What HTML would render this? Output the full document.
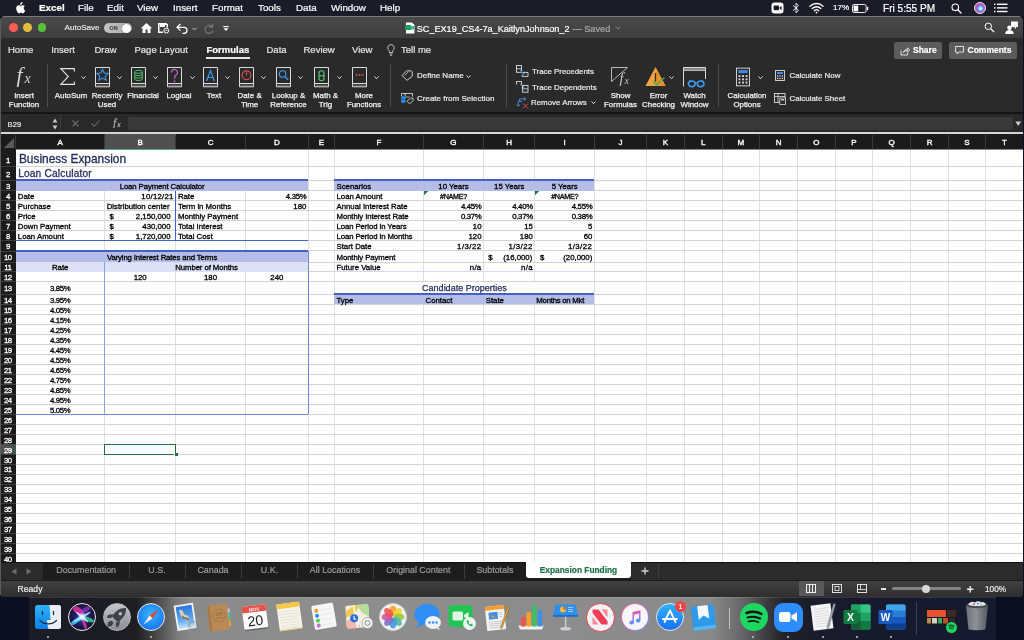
<!DOCTYPE html><html><head><meta charset="utf-8"><title>Excel</title><style>
*{margin:0;padding:0;box-sizing:border-box}
html,body{width:1024px;height:640px;overflow:hidden;background:#0c0f20}
body{position:relative;font-family:"Liberation Sans",sans-serif;color:#fff;-webkit-font-smoothing:antialiased}
.a{position:absolute}
.t{position:absolute;white-space:pre;line-height:1;-webkit-text-stroke:0.2px currentColor}
.c{position:absolute;white-space:pre;line-height:1;font-size:8px;color:#000;-webkit-text-stroke:0.3px currentColor}
.r{text-align:right}
.m{text-align:center}
.lbl{position:absolute;white-space:pre;line-height:8.6px;font-size:7.9px;color:#f2f2f2;text-align:center;-webkit-text-stroke:0.25px currentColor}
svg{position:absolute;overflow:visible}
#root{position:absolute;left:0;top:0;width:1024px;height:640px;overflow:hidden;will-change:transform}
</style></head><body><div id="root">
<div class="a" style="left:0px;top:0px;width:1024px;height:16px;background:#1a1c28;"></div>
<svg style="left:15px;top:2px" width="11" height="12" viewBox="0 0 22 24"><path fill="#fff" d="M15.2 0c.2 1.500-.4 2.900-1.300 3.900-.9 1.100-2.300 1.900-3.700 1.800-.2-1.400.5-2.900 1.300-3.800C12.400.8 14 .1 15.200 0zM19.800 8.200c-.2.100-2.500 1.400-2.400 4.200 0 3.300 2.900 4.400 3 4.400 0 .1-.5 1.600-1.500 3.100-.9 1.300-1.900 2.700-3.400 2.700-1.500 0-1.900-.9-3.600-.9s-2.200.9-3.600.9c-1.500.1-2.600-1.400-3.500-2.800C2.900 17.100 1.400 12.300 3.300 9c1-1.700 2.700-2.700 4.500-2.700 1.400 0 2.800 1 3.600 1 .9 0 2.500-1.200 4.200-1 .7 0 2.800.3 4.200 1.900z"/></svg>
<div class="t" style="left:39px;top:3px;font-size:9.8px;color:#fff;font-weight:700;">Excel</div>
<div class="t" style="left:78px;top:3px;font-size:9.8px;color:#fff;font-weight:400;">File</div>
<div class="t" style="left:107px;top:3px;font-size:9.8px;color:#fff;font-weight:400;">Edit</div>
<div class="t" style="left:137px;top:3px;font-size:9.8px;color:#fff;font-weight:400;">View</div>
<div class="t" style="left:173px;top:3px;font-size:9.8px;color:#fff;font-weight:400;">Insert</div>
<div class="t" style="left:212px;top:3px;font-size:9.8px;color:#fff;font-weight:400;">Format</div>
<div class="t" style="left:258px;top:3px;font-size:9.8px;color:#fff;font-weight:400;">Tools</div>
<div class="t" style="left:296px;top:3px;font-size:9.8px;color:#fff;font-weight:400;">Data</div>
<div class="t" style="left:331px;top:3px;font-size:9.8px;color:#fff;font-weight:400;">Window</div>
<div class="t" style="left:380px;top:3px;font-size:9.8px;color:#fff;font-weight:400;">Help</div>
<div class="t" style="left:883px;top:3.9px;font-size:10.1px;color:#fff;font-weight:400;">Fri 5:55 PM</div>
<div class="t" style="left:833px;top:4.4px;font-size:8.1px;color:#fff;font-weight:400;">17%</div>
<svg style="left:771px;top:2px" width="13" height="12" viewBox="0 0 13 12"><rect x="0.5" y="0.5" width="12" height="11" rx="3" fill="#fff"/><rect x="2.6" y="3.6" width="5.4" height="4.6" rx="1" fill="#1a1c28"/><path d="M8.6 5.2l2-1.300v4l-2-1.300z" fill="#1a1c28"/></svg>
<svg style="left:792px;top:2px" width="8" height="12" viewBox="0 0 8 12"><path d="M1 3.300l5.500 5L4 10.800V1.200l2.500 2.500L1 8.700" fill="none" stroke="#fff" stroke-width="0.9"/></svg>
<svg style="left:809px;top:2px" width="15" height="12" viewBox="0 0 15 12"><g fill="none" stroke="#fff" stroke-width="1.300" stroke-linecap="round"><path d="M1 4.200a9.200 9.200 0 0 1 13 0"/><path d="M3.200 6.500a6.100 6.100 0 0 1 8.600 0"/><path d="M5.400 8.700a3 3 0 0 1 4.200 0"/></g><circle cx="7.500" cy="10.600" r="0.900" fill="#fff"/></svg>
<svg style="left:852px;top:3.500px" width="17" height="9" viewBox="0 0 17 9"><rect x="0.5" y="0.5" width="13.600" height="8" rx="1.500" fill="none" stroke="#fff" stroke-width="0.9"/><rect x="1.6" y="1.6" width="4.600" height="5.800" fill="#fff"/><rect x="15" y="2.800" width="1.200" height="3.400" rx="0.5" fill="#fff"/></svg>
<svg style="left:951px;top:2.500px" width="11" height="11" viewBox="0 0 11 11"><circle cx="4.300" cy="4.300" r="3.300" fill="none" stroke="#fff" stroke-width="1.100"/><path d="M6.800 6.800L10 10" stroke="#fff" stroke-width="1.300" stroke-linecap="round"/></svg>
<div class="a" style="left:974px;top:2px;width:12px;height:12px;border-radius:50%;background:radial-gradient(circle at 55% 55%,#fff 0,#c9f0ff 14%,#4fb0f5 30%,#b04fd0 52%,#e0409a 68%,#3a2a80 86%);border:1px solid #eeeef4"></div>
<svg style="left:994px;top:3px" width="13" height="10" viewBox="0 0 13 10"><g fill="#fff"><rect x="0" y="0.600" width="1.500" height="1.400"/><rect x="3" y="0.600" width="10.500" height="1.400"/><rect x="0" y="4.200" width="1.500" height="1.400"/><rect x="3" y="4.200" width="10.500" height="1.400"/><rect x="0" y="7.800" width="1.500" height="1.400"/><rect x="3" y="7.800" width="10.500" height="1.400"/></g></svg>
<div class="a" style="left:0;top:16px;width:1023px;height:580.500px;background:#2a2a2a;border-radius:5px 5px 4px 4px;overflow:hidden">
<div class="a" style="left:0px;top:0px;width:1024px;height:22px;background:linear-gradient(#4a4a4a,#3e3e3e);"></div>
<div class="a" style="left:0px;top:0px;width:1024px;height:1px;background:#7a7a7a;"></div>
<div class="a" style="left:9.149999999999999px;top:7.25px;width:8.9px;height:8.9px;background:#fc5b57;border-radius:50%"></div>
<div class="a" style="left:23.25px;top:7.25px;width:8.9px;height:8.9px;background:#e5bf3c;border-radius:50%"></div>
<div class="a" style="left:37.55px;top:7.25px;width:8.9px;height:8.9px;background:#57c038;border-radius:50%"></div>
<div class="t" style="left:64.5px;top:8px;font-size:8.1px;color:#e6e6e6;font-weight:400;">AutoSave</div>
<div class="a" style="left:103.75px;top:7.4px;width:28.5px;height:9.6px;background:linear-gradient(90deg,#c4c4c4,#a8a8a8);border-radius:5px"></div>
<div class="t" style="left:109.5px;top:9.6px;font-size:5.4px;color:#4a4a4a;font-weight:700;">ON</div>
<div class="a" style="left:122.4px;top:7.8px;width:9.0px;height:8.8px;background:#fff;border-radius:50%;box-shadow:0 0 1px rgba(0,0,0,0.5)"></div>
<svg style="left:139.5px;top:5.5px" width="13" height="12" viewBox="0 0 13 12"><path d="M6.500 1L0.800 6.300h1.700V11h3V7.600h2V11h3V6.300h1.700z" fill="#fff"/></svg>
<svg style="left:157px;top:6px" width="13" height="12" viewBox="0 0 13 12"><path d="M1 1h8.500l1.500 1.500V5.500H9.500V3H8V5H3V2.500H2.500V9.500H6V11H1z" fill="#fff"/><circle cx="9.300" cy="8.600" r="2.400" fill="none" stroke="#fff" stroke-width="1"/><path d="M8.200 8.600h2.200" stroke="#fff" stroke-width="0.8"/></svg>
<svg style="left:176px;top:6.5px" width="12" height="11" viewBox="0 0 12 11"><path d="M4.500 1L1 4.300l3.500 3.300M1.200 4.300H8a3 3 0 0 1 0 6H6.500" fill="none" stroke="#fff" stroke-width="1.200"/></svg>
<svg style="left:192px;top:10.5px" width="5" height="4" viewBox="0 0 5 4"><path d="M0.500 0.800L2.500 2.800L4.500 0.800" fill="none" stroke="#ddd" stroke-width="0.9"/></svg>
<svg style="left:202.5px;top:6.0px" width="12" height="12" viewBox="0 0 12 12"><path d="M9.600 5.200H6.200M9.600 5.200V1.600M9.400 5a4 4 0 1 0 .600 3.500" fill="none" stroke="#747474" stroke-width="1.200"/></svg>
<svg style="left:223.2px;top:10.2px" width="6" height="5.2" viewBox="0 0 7 6"><rect x="0.300" y="0" width="6.400" height="1.300" fill="#fff"/><path d="M0.600 2.600h5.800L3.500 5.800z" fill="#fff"/></svg>
<svg style="left:404.5px;top:5.7px" width="10" height="12" viewBox="0 0 10 12"><path d="M1 0.500h6l2.500 2.500v8.500H1z" fill="#fff"/><rect x="0" y="3" width="6" height="5" fill="#1e9e5a"/><rect x="5" y="4" width="4" height="3.500" fill="#35b673"/></svg>
<div class="t" style="left:416.8px;top:9.0px;font-size:9.1px;color:#fff;font-weight:400;">SC_EX19_CS4-7a_KaitlynJohnson_2</div>
<div class="t" style="left:572.5px;top:9.0px;font-size:9.2px;color:#a8a8a8;font-weight:400;">— Saved</div>
<svg style="left:614.5px;top:10.3px" width="6" height="4" viewBox="0 0 6 4"><path d="M0.500 0.500L3 3L5.500 0.500" fill="none" stroke="#8a8a8a" stroke-width="0.9"/></svg>
<svg style="left:983.5px;top:6px" width="11" height="11" viewBox="0 0 11 11"><circle cx="4.300" cy="4.300" r="3.200" fill="none" stroke="#fff" stroke-width="1"/><path d="M6.700 6.700L10 10" stroke="#fff" stroke-width="1.200"/></svg>
<svg style="left:1004.5px;top:5px" width="14" height="14" viewBox="0 0 14 14"><path d="M6 0.500h7v5.500h-2v2l-2-2H6z" fill="#fff"/><circle cx="4.500" cy="6.800" r="2.300" fill="#fff"/><path d="M0.300 13c0-3 2-4 4.200-4s4.200 1 4.200 4z" fill="#fff"/></svg>
<div class="t" style="left:8px;top:29.2px;font-size:9.5px;color:#e4e4e4;font-weight:400;">Home</div>
<div class="t" style="left:51.2px;top:29.2px;font-size:9.5px;color:#e4e4e4;font-weight:400;">Insert</div>
<div class="t" style="left:94.5px;top:29.2px;font-size:9.5px;color:#e4e4e4;font-weight:400;">Draw</div>
<div class="t" style="left:134.5px;top:29.2px;font-size:9.5px;color:#e4e4e4;font-weight:400;">Page Layout</div>
<div class="t" style="left:206.5px;top:29.2px;font-size:9.5px;color:#fff;font-weight:700;">Formulas</div>
<div class="t" style="left:266.5px;top:29.2px;font-size:9.5px;color:#e4e4e4;font-weight:400;">Data</div>
<div class="t" style="left:303.5px;top:29.2px;font-size:9.5px;color:#e4e4e4;font-weight:400;">Review</div>
<div class="t" style="left:352px;top:29.2px;font-size:9.5px;color:#e4e4e4;font-weight:400;">View</div>
<div class="a" style="left:206px;top:41.4px;width:44px;height:1.3px;background:#e4e4e4;"></div>
<svg style="left:386.5px;top:27.5px" width="8" height="12" viewBox="0 0 8 12"><path d="M4 0.600a3.300 3.300 0 0 0-1.700 6.100v1.800h3.400V6.700A3.300 3.300 0 0 0 4 0.600zM2.500 10h3M3 11.300h2" fill="none" stroke="#ddd" stroke-width="0.8"/></svg>
<div class="t" style="left:401px;top:29.2px;font-size:9.5px;color:#e4e4e4;font-weight:400;">Tell me</div>
<div class="a" style="left:894px;top:26px;width:47.5px;height:17px;background:#5c5c5c;border-radius:2.500px"></div>
<svg style="left:900px;top:29.5px" width="10" height="10" viewBox="0 0 10 10"><path d="M1 4.500v4.500h6.500V7M3.500 6.500c0.300-2 1.500-3 4-3V1.800L9.600 4L7.500 6.200V4.700C5.600 4.700 4.400 5.200 3.500 6.500z" fill="none" stroke="#fff" stroke-width="0.8"/></svg>
<div class="t" style="left:913px;top:30.3px;font-size:8.5px;color:#fff;font-weight:700;">Share</div>
<div class="a" style="left:949px;top:26px;width:68px;height:17px;background:#5c5c5c;border-radius:2.500px"></div>
<svg style="left:955px;top:30px" width="9" height="9" viewBox="0 0 9 9"><path d="M0.500 0.500h8v5.500h-4.500l-2 2v-2h-1.500z" fill="none" stroke="#fff" stroke-width="0.8"/></svg>
<div class="t" style="left:967.5px;top:30.3px;font-size:8.5px;color:#fff;font-weight:700;">Comments</div>
<div class="t" style="left:16.5px;top:48.5px;font-size:21.5px;color:#d6d6d6;font-weight:400;font-family:'Liberation Serif',serif;-webkit-text-stroke:0;"><i>f</i></div>
<div class="t" style="left:24.5px;top:55.5px;font-size:14px;color:#d6d6d6;font-weight:400;font-family:'Liberation Serif',serif;-webkit-text-stroke:0;"><i>x</i></div>
<div class="lbl" style="left:-6.0px;top:76.3px;width:60px">Insert<br>Function</div>
<div class="a" style="left:47.0px;top:47.5px;width:1px;height:43.0px;background:#4d4d4d;"></div>
<svg style="left:59.5px;top:52px" width="15" height="17" viewBox="0 0 15 17"><path d="M14.300 3.500V0.600H0.800L8.300 8.500L0.800 16.400h13.500v-2.900" fill="none" stroke="#e6e6e6" stroke-width="1.100"/></svg>
<svg style="left:81.25px;top:60.0px" width="5" height="3.5" viewBox="0 0 5 3.500"><path d="M0.500 0.500L2.500 2.600L4.500 0.500" fill="none" stroke="#e8e8e8" stroke-width="1"/></svg>
<div class="lbl" style="left:41.0px;top:76.3px;width:60px">AutoSum</div>
<svg style="left:95px;top:51px" width="15" height="20.5" viewBox="0 0 15 20.500"><path d="M0.500 0.500h14v19.300h-14z" fill="none" stroke="#dcdcdc" stroke-width="1"/><path d="M0.500 16.500h14" stroke="#dcdcdc" stroke-width="1"/><path d="M1.500 18.200h12" stroke="#9a9a9a" stroke-width="0.7"/><path d="M7.500 2.200l1.750 3.700 4 .500-3 2.750.850 4-3.600-2-3.600 2 .850-4-3-2.750 4-.500z" fill="none" stroke="#3b9cf0" stroke-width="1.050"/></svg>
<svg style="left:117.0px;top:60.0px" width="5" height="3.5" viewBox="0 0 5 3.500"><path d="M0.500 0.500L2.500 2.600L4.500 0.500" fill="none" stroke="#e8e8e8" stroke-width="1"/></svg>
<div class="lbl" style="left:77.0px;top:76.3px;width:60px">Recently<br>Used</div>
<svg style="left:131px;top:51px" width="15" height="20.5" viewBox="0 0 15 20.500"><path d="M0.500 0.500h14v19.300h-14z" fill="none" stroke="#dcdcdc" stroke-width="1"/><path d="M0.500 16.500h14" stroke="#dcdcdc" stroke-width="1"/><path d="M1.500 18.200h12" stroke="#9a9a9a" stroke-width="0.7"/><g fill="none" stroke="#4fc16c" stroke-width="1"><ellipse cx="7.500" cy="4.800" rx="3.800" ry="1.500"/><path d="M3.700 4.800v7.200a3.800 1.500 0 0 0 7.600 0V4.800"/><path d="M3.700 7.200a3.800 1.500 0 0 0 7.600 0M3.700 9.600a3.800 1.500 0 0 0 7.600 0"/></g></svg>
<svg style="left:153.0px;top:60.0px" width="5" height="3.5" viewBox="0 0 5 3.500"><path d="M0.500 0.500L2.500 2.600L4.500 0.500" fill="none" stroke="#e8e8e8" stroke-width="1"/></svg>
<div class="lbl" style="left:113.0px;top:76.3px;width:60px">Financial</div>
<svg style="left:167px;top:51px" width="15" height="20.5" viewBox="0 0 15 20.500"><path d="M0.500 0.500h14v19.300h-14z" fill="none" stroke="#dcdcdc" stroke-width="1"/><path d="M0.500 16.500h14" stroke="#dcdcdc" stroke-width="1"/><path d="M1.500 18.200h12" stroke="#9a9a9a" stroke-width="0.7"/><path d="M4.300 5.600a3.100 3.100 0 1 1 4.900 2.500c-1.200.900-1.700 1.500-1.700 2.900v.700" fill="none" stroke="#c864d8" stroke-width="1.200"/><circle cx="7.500" cy="14.200" r="0.850" fill="#c864d8"/></svg>
<svg style="left:189.5px;top:60.0px" width="5" height="3.5" viewBox="0 0 5 3.500"><path d="M0.500 0.500L2.500 2.600L4.500 0.500" fill="none" stroke="#e8e8e8" stroke-width="1"/></svg>
<div class="lbl" style="left:149.0px;top:76.3px;width:60px">Logical</div>
<svg style="left:203px;top:51px" width="15" height="20.5" viewBox="0 0 15 20.500"><path d="M0.500 0.500h14v19.300h-14z" fill="none" stroke="#dcdcdc" stroke-width="1"/><path d="M0.500 16.500h14" stroke="#dcdcdc" stroke-width="1"/><path d="M1.500 18.200h12" stroke="#9a9a9a" stroke-width="0.7"/><path d="M3.600 14L7.500 3.600L11.400 14M5 10.500h5" fill="none" stroke="#3b9cf0" stroke-width="1.200"/></svg>
<svg style="left:225.0px;top:60.0px" width="5" height="3.5" viewBox="0 0 5 3.500"><path d="M0.500 0.500L2.500 2.600L4.500 0.500" fill="none" stroke="#e8e8e8" stroke-width="1"/></svg>
<div class="lbl" style="left:184.0px;top:76.3px;width:60px">Text</div>
<svg style="left:238.5px;top:51px" width="15" height="20.5" viewBox="0 0 15 20.500"><path d="M0.500 0.500h14v19.300h-14z" fill="none" stroke="#dcdcdc" stroke-width="1"/><path d="M0.500 16.500h14" stroke="#dcdcdc" stroke-width="1"/><path d="M1.500 18.200h12" stroke="#9a9a9a" stroke-width="0.7"/><circle cx="7.500" cy="8.300" r="4.400" fill="none" stroke="#e8504a" stroke-width="1.100"/><path d="M7.500 5.200v3.400" stroke="#e8504a" stroke-width="1.100"/></svg>
<svg style="left:260.5px;top:60.0px" width="5" height="3.5" viewBox="0 0 5 3.500"><path d="M0.500 0.500L2.500 2.600L4.500 0.500" fill="none" stroke="#e8e8e8" stroke-width="1"/></svg>
<div class="lbl" style="left:219.6px;top:76.3px;width:60px">Date &amp;<br>Time</div>
<svg style="left:275.5px;top:51px" width="15" height="20.5" viewBox="0 0 15 20.500"><path d="M0.500 0.500h14v19.300h-14z" fill="none" stroke="#dcdcdc" stroke-width="1"/><path d="M0.500 16.500h14" stroke="#dcdcdc" stroke-width="1"/><path d="M1.500 18.200h12" stroke="#9a9a9a" stroke-width="0.7"/><circle cx="6.600" cy="7" r="3.300" fill="none" stroke="#3b9cf0" stroke-width="1.100"/><path d="M9 9.500l3.200 3.500" stroke="#3b9cf0" stroke-width="1.300"/></svg>
<svg style="left:298.1px;top:60.0px" width="5" height="3.5" viewBox="0 0 5 3.500"><path d="M0.500 0.500L2.500 2.600L4.500 0.500" fill="none" stroke="#e8e8e8" stroke-width="1"/></svg>
<div class="lbl" style="left:258.5px;top:76.3px;width:60px">Lookup &amp;<br>Reference</div>
<svg style="left:314px;top:51px" width="15" height="20.5" viewBox="0 0 15 20.500"><path d="M0.500 0.500h14v19.300h-14z" fill="none" stroke="#dcdcdc" stroke-width="1"/><path d="M0.500 16.500h14" stroke="#dcdcdc" stroke-width="1"/><path d="M1.500 18.200h12" stroke="#9a9a9a" stroke-width="0.7"/><rect x="5" y="3.800" width="5" height="10" rx="2.500" fill="none" stroke="#4fd07a" stroke-width="1.100"/><path d="M5 8.800h5" stroke="#4fd07a" stroke-width="1.100"/></svg>
<svg style="left:336.5px;top:60.0px" width="5" height="3.5" viewBox="0 0 5 3.500"><path d="M0.500 0.500L2.500 2.600L4.500 0.500" fill="none" stroke="#e8e8e8" stroke-width="1"/></svg>
<div class="lbl" style="left:295.5px;top:76.3px;width:60px">Math &amp;<br>Trig</div>
<svg style="left:352.2px;top:51px" width="15" height="20.5" viewBox="0 0 15 20.500"><path d="M0.500 0.500h14v19.300h-14z" fill="none" stroke="#dcdcdc" stroke-width="1"/><path d="M0.500 16.500h14" stroke="#dcdcdc" stroke-width="1"/><path d="M1.500 18.200h12" stroke="#9a9a9a" stroke-width="0.7"/><g fill="#e8504a"><rect x="3.600" y="7.200" width="1.800" height="1.500"/><rect x="6.600" y="7.200" width="1.800" height="1.500"/><rect x="9.600" y="7.200" width="1.800" height="1.500"/></g></svg>
<svg style="left:374.3px;top:60.0px" width="5" height="3.5" viewBox="0 0 5 3.500"><path d="M0.500 0.500L2.500 2.600L4.500 0.500" fill="none" stroke="#e8e8e8" stroke-width="1"/></svg>
<div class="lbl" style="left:334.0px;top:76.3px;width:60px">More<br>Functions</div>
<div class="a" style="left:390.0px;top:47.5px;width:1px;height:43.0px;background:#4d4d4d;"></div>
<svg style="left:401px;top:54px" width="12" height="11" viewBox="0 0 12 11"><path d="M5.600 0.800h4.600l1 1v4.500L6 10.300L1 5.500z" fill="none" stroke="#e0e0e0" stroke-width="0.9" transform="rotate(0)"/><path d="M3.500 5.500l4-3.800" stroke="#e0e0e0" stroke-width="0.7"/></svg>
<div class="t" style="left:417px;top:56.2px;font-size:8px;color:#ececec;font-weight:400;">Define Name</div>
<svg style="left:466.0px;top:59.0px" width="5" height="3.5" viewBox="0 0 5 3.500"><path d="M0.500 0.500L2.500 2.600L4.500 0.500" fill="none" stroke="#e8e8e8" stroke-width="1"/></svg>
<svg style="left:401px;top:76.8px" width="13" height="12" viewBox="0 0 13 12"><path d="M0.500 3.200V0.500h11v3M4.200 0.500v2.700" fill="none" stroke="#d8d8d8" stroke-width="0.900"/><rect x="0.200" y="3.400" width="4.300" height="6.300" fill="#2f8fe8"/><path d="M0.200 6.300h4.300" stroke="#2a2a2a" stroke-width="0.600"/><path d="M4.500 4h4" stroke="#d8d8d8" stroke-width="0.700"/><path d="M6 8.200l3.600-3.200 2.400.200.200 2.400-3.600 3.300z" fill="#2a2a2a" stroke="#e0e0e0" stroke-width="0.800"/></svg>
<div class="t" style="left:417px;top:78.9px;font-size:8px;color:#ececec;font-weight:400;">Create from Selection</div>
<div class="a" style="left:506.0px;top:47.5px;width:1px;height:43.0px;background:#4d4d4d;"></div>
<svg style="left:516px;top:49px" width="13" height="12" viewBox="0 0 13 12"><rect x="0.500" y="0.500" width="5" height="6.800" fill="none" stroke="#dcdcdc" stroke-width="0.900"/><path d="M0.500 3.800h5" stroke="#dcdcdc" stroke-width="0.800"/><path d="M4.300 5.300l3.600 3.600M8.200 6.600v2.500h-2.500" fill="none" stroke="#3b9cf0" stroke-width="0.900"/><path d="M7 7.400h5v4h-5.800v-1.500" fill="none" stroke="#dcdcdc" stroke-width="0.900"/></svg>
<div class="t" style="left:532px;top:52.0px;font-size:7.9px;color:#ececec;font-weight:400;">Trace Precedents</div>
<svg style="left:516px;top:65px" width="13" height="12" viewBox="0 0 13 12"><path d="M0.500 3.500v-3h5v3.200" fill="none" stroke="#dcdcdc" stroke-width="0.900"/><path d="M3.800 2.800l3.700 3.700M7.800 4.200v2.500h-2.500" fill="none" stroke="#3b9cf0" stroke-width="0.900"/><rect x="6.600" y="4.400" width="5.400" height="6.800" fill="none" stroke="#dcdcdc" stroke-width="0.900"/><path d="M6.600 7.800h5.400" stroke="#dcdcdc" stroke-width="0.800"/></svg>
<div class="t" style="left:532px;top:68.0px;font-size:7.9px;color:#ececec;font-weight:400;">Trace Dependents</div>
<svg style="left:516px;top:80.5px" width="13" height="12" viewBox="0 0 13 12"><path d="M3.500 2h6.200M8 0.500l1.800 1.500-1.800 1.500M3.500 2v2.500M3.500 4.500h2.500M2.300 4v5M0.800 7.600l1.500 1.600 1.500-1.600" fill="none" stroke="#3b9cf0" stroke-width="0.900"/><path d="M7 6.500l5 5M12 6.500l-5 5" stroke="#e5484d" stroke-width="1"/></svg>
<div class="t" style="left:531px;top:83.3px;font-size:7.9px;color:#ececec;font-weight:400;">Remove Arrows</div>
<svg style="left:590.5px;top:84.7px" width="5" height="3.5" viewBox="0 0 5 3.500"><path d="M0.500 0.500L2.500 2.600L4.500 0.500" fill="none" stroke="#e8e8e8" stroke-width="1"/></svg>
<svg style="left:611px;top:50.5px" width="21" height="20" viewBox="0 0 21 20"><path d="M0.500 0.500H16.500L0.500 14.500z" fill="none" stroke="#c8c8c8" stroke-width="0.9"/></svg>
<div class="t" style="left:619.5px;top:55.0px;font-size:14.5px;color:#c4c4c4;font-weight:400;font-family:'Liberation Serif',serif;-webkit-text-stroke:0;"><i>f</i></div>
<div class="t" style="left:624.5px;top:60px;font-size:10px;color:#c4c4c4;font-weight:400;font-family:'Liberation Serif',serif;-webkit-text-stroke:0;"><i>x</i></div>
<div class="lbl" style="left:590.5px;top:76.3px;width:60px">Show<br>Formulas</div>
<svg style="left:644.5px;top:50px" width="22" height="21" viewBox="0 0 22 21"><path d="M10.500 1L20.500 20H0.500z" fill="#f2a444"/><path d="M10.500 1L20.500 20H10.500z" fill="#e8932e"/><path d="M10.500 7v8.500" stroke="#3a2a10" stroke-width="1.300"/><path d="M8 15l3.500 3.800l8-7.300" fill="none" stroke="#3db35a" stroke-width="1.300"/></svg>
<svg style="left:669.0px;top:60.0px" width="5" height="3.5" viewBox="0 0 5 3.500"><path d="M0.500 0.500L2.500 2.600L4.500 0.500" fill="none" stroke="#e8e8e8" stroke-width="1"/></svg>
<div class="lbl" style="left:628.5px;top:76.3px;width:60px">Error<br>Checking</div>
<svg style="left:683px;top:50.5px" width="23" height="22" viewBox="0 0 23 22"><path d="M0.500 19.500V0.500h22V12M0.500 3.300h22" fill="none" stroke="#d8d8d8" stroke-width="1"/><path d="M0.500 1.900h22" stroke="#d8d8d8" stroke-width="1.800" opacity="0.550"/><ellipse cx="8.800" cy="16.800" rx="3.400" ry="2.900" fill="none" stroke="#3b9cf0" stroke-width="1.500"/><ellipse cx="17.600" cy="16.800" rx="3.400" ry="2.900" fill="none" stroke="#3b9cf0" stroke-width="1.500"/><path d="M12.200 16h2M5.500 16l2.200-3.200M20.900 16l-2.200-3.200" stroke="#3b9cf0" stroke-width="1.200" fill="none"/></svg>
<div class="lbl" style="left:664.5px;top:76.3px;width:60px">Watch<br>Window</div>
<div class="a" style="left:718.0px;top:47.5px;width:1px;height:43.0px;background:#4d4d4d;"></div>
<svg style="left:735.8px;top:50.5px" width="14" height="20" viewBox="0 0 15 20"><rect x="0.500" y="0.500" width="14" height="19" fill="none" stroke="#dcdcdc" stroke-width="1"/><rect x="2.600" y="2.600" width="9.800" height="3.200" fill="#3b8eea"/><g fill="#dcdcdc"><rect x="2.700" y="8" width="2" height="2"/><rect x="6.500" y="8" width="2" height="2"/><rect x="10.300" y="8" width="2" height="2"/><rect x="2.700" y="11.500" width="2" height="2"/><rect x="6.500" y="11.500" width="2" height="2"/><rect x="10.300" y="11.500" width="2" height="2"/><rect x="2.700" y="15" width="2" height="2"/><rect x="6.500" y="15" width="2" height="2"/><rect x="10.300" y="15" width="2" height="2"/></g></svg>
<svg style="left:757.5px;top:60.0px" width="5" height="3.5" viewBox="0 0 5 3.500"><path d="M0.500 0.500L2.500 2.600L4.500 0.500" fill="none" stroke="#e8e8e8" stroke-width="1"/></svg>
<div class="lbl" style="left:717.0px;top:76.3px;width:60px">Calculation<br>Options</div>
<svg style="left:774.5px;top:54px" width="10" height="11" viewBox="0 0 10 11"><rect x="0.500" y="0.500" width="9" height="10" fill="none" stroke="#dcdcdc" stroke-width="0.900"/><rect x="2" y="2" width="6" height="2" fill="#3b8eea"/><g fill="#dcdcdc"><rect x="2" y="5.300" width="1.300" height="1.300"/><rect x="4.400" y="5.300" width="1.300" height="1.300"/><rect x="6.800" y="5.300" width="1.300" height="1.300"/><rect x="2" y="7.800" width="1.300" height="1.300"/><rect x="4.400" y="7.800" width="1.300" height="1.300"/><rect x="6.800" y="7.800" width="1.300" height="1.300"/></g></svg>
<div class="t" style="left:789.5px;top:55.6px;font-size:7.9px;color:#ececec;font-weight:400;">Calculate Now</div>
<svg style="left:773.5px;top:76.5px" width="12" height="12" viewBox="0 0 12 12"><rect x="0.500" y="0.500" width="10.500" height="9" fill="none" stroke="#dcdcdc" stroke-width="0.900"/><path d="M0.500 3.500h10.500M4 0.500v9" stroke="#dcdcdc" stroke-width="0.800"/><rect x="5.800" y="5" width="5.700" height="6.500" fill="#2a2a2a" stroke="#dcdcdc" stroke-width="0.800"/><rect x="7" y="6.200" width="3.300" height="1.300" fill="#dcdcdc"/></svg>
<div class="t" style="left:789.5px;top:78.7px;font-size:7.9px;color:#ececec;font-weight:400;">Calculate Sheet</div>
<div class="a" style="left:0px;top:96.4px;width:1024px;height:1.8px;background:#141414;"></div>
<div class="a" style="left:0px;top:98.0px;width:1024px;height:18.2px;background:#292929;"></div>
<div class="t" style="left:7.6px;top:104.6px;font-size:7.6px;color:#e6e6e6;font-weight:400;">B29</div>
<svg style="left:51.5px;top:101.5px" width="6" height="12" viewBox="0 0 6 12"><path d="M3 0.500L5.500 4.500h-5zM3 11.500L5.500 7.500h-5z" fill="#c8c8c8"/></svg>
<div class="a" style="left:60px;top:98.5px;width:1px;height:17px;background:#3a3a3a;"></div>
<svg style="left:71.5px;top:104px" width="7" height="7" viewBox="0 0 7 7"><path d="M0.500 0.500l6 6M6.500 0.500l-6 6" stroke="#6a6a6a" stroke-width="1.100"/></svg>
<svg style="left:91px;top:104px" width="9" height="7" viewBox="0 0 9 7"><path d="M0.500 3.500l2.800 2.800L8.500 0.500" fill="none" stroke="#6a6a6a" stroke-width="1.100"/></svg>
<div class="t" style="left:113.2px;top:102.0px;font-size:10.5px;color:#b8b8b8;font-weight:400;font-family:'Liberation Serif',serif;"><i>f</i></div>
<div class="t" style="left:117.3px;top:104.6px;font-size:7.8px;color:#b8b8b8;font-weight:400;font-family:'Liberation Serif',serif;"><i>x</i></div>
<div class="a" style="left:128px;top:100.9px;width:885px;height:12.9px;background:#383838;border-radius:2px"></div>
<svg style="left:1015.3px;top:104.8px" width="6.4" height="5.5" viewBox="0 0 7 6"><path d="M0.300 0.500h6.400L3.500 5.500z" fill="#c8c8c8"/></svg>
<div class="a" style="left:0px;top:116.1px;width:1024px;height:2.1px;background:#d6d6d6;"></div>
<div class="a" style="left:0px;top:118px;width:1024px;height:428px;background:#fff;"></div>
<svg style="left:0;top:-16px" width="1024" height="640" viewBox="0 0 1024 640"><g stroke="#dfdfdf" stroke-width="1" fill="none"><path d="M104.5 149V562"/><path d="M175.5 149V562"/><path d="M245.5 149V562"/><path d="M308.5 149V562"/><path d="M334.5 149V562"/><path d="M423.5 149V562"/><path d="M483.5 149V562"/><path d="M534.5 149V562"/><path d="M594.5 149V562"/><path d="M646.5 149V562"/><path d="M684.5 149V562"/><path d="M722.5 149V562"/><path d="M759.5 149V562"/><path d="M797.5 149V562"/><path d="M835.5 149V562"/><path d="M872.5 149V562"/><path d="M910.5 149V562"/><path d="M948.5 149V562"/><path d="M985.5 149V562"/><path d="M1023.5 149V562"/></g><g stroke="#d3d3d3" stroke-width="1" fill="none"><path d="M15.75 166.5H1024"/><path d="M15.75 180.5H1024"/><path d="M15.75 190.5H1024"/><path d="M15.75 200.5H1024"/><path d="M15.75 210.5H1024"/><path d="M15.75 220.5H1024"/><path d="M15.75 230.5H1024"/><path d="M15.75 240.5H1024"/><path d="M15.75 250.5H1024"/><path d="M15.75 262.5H1024"/><path d="M15.75 271.5H1024"/><path d="M15.75 281.5H1024"/><path d="M15.75 294.5H1024"/><path d="M15.75 304.5H1024"/><path d="M15.75 314.5H1024"/><path d="M15.75 324.5H1024"/><path d="M15.75 334.5H1024"/><path d="M15.75 344.5H1024"/><path d="M15.75 354.5H1024"/><path d="M15.75 364.5H1024"/><path d="M15.75 374.5H1024"/><path d="M15.75 384.5H1024"/><path d="M15.75 394.5H1024"/><path d="M15.75 404.5H1024"/><path d="M15.75 414.5H1024"/><path d="M15.75 424.5H1024"/><path d="M15.75 434.5H1024"/><path d="M15.75 444.5H1024"/><path d="M15.75 454.5H1024"/><path d="M15.75 464.5H1024"/><path d="M15.75 474.5H1024"/><path d="M15.75 484.5H1024"/><path d="M15.75 493.5H1024"/><path d="M15.75 503.5H1024"/><path d="M15.75 513.5H1024"/><path d="M15.75 523.5H1024"/><path d="M15.75 533.5H1024"/><path d="M15.75 543.5H1024"/><path d="M15.75 553.5H1024"/></g></svg>
<div class="a" style="left:16.35px;top:133.9px;width:291.5px;height:15.75px;background:#fff;"></div>
<div class="a" style="left:16.35px;top:150.85px;width:291.5px;height:12.55px;background:#fff;"></div>
<div class="a" style="left:335.0px;top:266.2px;width:258.8px;height:11.45px;background:#fff;"></div>
<div class="a" style="left:15.75px;top:164px;width:292.7px;height:10.5px;background:#b4bde6;"></div>
<div class="a" style="left:334.4px;top:164px;width:260.0px;height:10.5px;background:#b4bde6;"></div>
<div class="a" style="left:15.75px;top:235.0px;width:292.7px;height:11.0px;background:#b4bde6;"></div>
<div class="a" style="left:15.75px;top:246px;width:292.7px;height:9.7px;background:#dde1f5;"></div>
<div class="a" style="left:334.4px;top:278.25px;width:260.0px;height:10.05px;background:#b4bde6;"></div>
<div class="a" style="left:15.75px;top:163.4px;width:292.7px;height:1.6px;background:#4460c8;"></div>
<div class="a" style="left:334.4px;top:163.4px;width:260.0px;height:1.6px;background:#4460c8;"></div>
<div class="a" style="left:15.75px;top:223.9px;width:292.7px;height:1.0px;background:#4460c8;"></div>
<div class="a" style="left:15.75px;top:234.2px;width:292.7px;height:1.8px;background:#4460c8;"></div>
<div class="a" style="left:334.4px;top:277.15px;width:260.0px;height:1.8px;background:#4460c8;"></div>
<div class="a" style="left:15.75px;top:397.8px;width:292.7px;height:1.0px;background:#6f86d6;"></div>
<div class="a" style="left:175.25px;top:174.5px;width:1.1px;height:49.9px;background:#4460c8;"></div>
<div class="a" style="left:307.9px;top:235.0px;width:1.1px;height:163.3px;background:#6f86d6;"></div>
<div class="a" style="left:104.1px;top:246px;width:1.0px;height:152.3px;background:#8fa0df;"></div>
<div class="a" style="left:334.4px;top:255.2px;width:260.0px;height:1.0px;background:#d5daf2;"></div>
<svg style="left:423.9px;top:175.0px" width="5" height="5" viewBox="0 0 5 5"><path d="M0 0h4.300L0 4.300z" fill="#1c7a3a"/></svg>
<svg style="left:535.4px;top:175.0px" width="5" height="5" viewBox="0 0 5 5"><path d="M0 0h4.300L0 4.300z" fill="#1c7a3a"/></svg>
<div class="c" style="top:138px;font-size:11.9px;color:#1f2a5a;-webkit-text-stroke:0.3px #1f2a5a;left:18.95px;">Business Expansion</div>
<div class="c" style="top:153px;font-size:10.2px;color:#1f2a5a;letter-spacing:0.16px;-webkit-text-stroke:0.28px #1f2a5a;left:18.15px;">Loan Calculator</div>
<div class="c" style="top:167px;font-size:7.8px;color:#000;letter-spacing:-0.12px;left:15.75px;width:292.7px;text-align:center;">Loan Payment Calculator</div>
<div class="c" style="top:177px;font-size:7.8px;color:#000;left:17.85px;">Date</div>
<div class="c" style="top:177px;font-size:7.8px;color:#000;letter-spacing:0.25px;right:849.3px;">10/12/21</div>
<div class="c" style="top:177px;font-size:7.8px;color:#000;left:177.9px;">Rate</div>
<div class="c" style="top:177px;font-size:7.8px;color:#000;letter-spacing:-0.3px;right:716.65px;">4.35%</div>
<div class="c" style="top:187px;font-size:7.8px;color:#000;left:17.85px;">Purchase</div>
<div class="c" style="top:187px;font-size:7.8px;color:#000;left:106.7px;">Distribution center</div>
<div class="c" style="top:187px;font-size:7.8px;color:#000;left:177.9px;">Term in Months</div>
<div class="c" style="top:187px;font-size:7.8px;color:#000;right:716.65px;">180</div>
<div class="c" style="top:197px;font-size:7.8px;color:#000;left:17.85px;">Price</div>
<div class="c" style="top:197px;font-size:7.8px;color:#000;left:109.4px;">$</div>
<div class="c" style="top:197px;font-size:7.8px;color:#000;right:852.5px;">2,150,000</div>
<div class="c" style="top:197px;font-size:7.8px;color:#000;left:177.9px;">Monthly Payment</div>
<div class="c" style="top:207px;font-size:7.8px;color:#000;left:17.85px;">Down Payment</div>
<div class="c" style="top:207px;font-size:7.8px;color:#000;left:109.4px;">$</div>
<div class="c" style="top:207px;font-size:7.8px;color:#000;right:852.5px;">430,000</div>
<div class="c" style="top:207px;font-size:7.8px;color:#000;left:177.9px;">Total Interest</div>
<div class="c" style="top:217px;font-size:7.8px;color:#000;left:17.85px;">Loan Amount</div>
<div class="c" style="top:217px;font-size:7.8px;color:#000;left:109.4px;">$</div>
<div class="c" style="top:217px;font-size:7.8px;color:#000;right:852.5px;">1,720,000</div>
<div class="c" style="top:217px;font-size:7.8px;color:#000;left:177.9px;">Total Cost</div>
<div class="c" style="top:238px;font-size:7.8px;color:#000;letter-spacing:-0.15px;left:15.75px;width:292.7px;text-align:center;">Varying Interest Rates and Terms</div>
<div class="c" style="top:248px;font-size:7.8px;color:#000;left:15.75px;width:88.85px;text-align:center;">Rate</div>
<div class="c" style="top:248px;font-size:7.8px;color:#000;letter-spacing:-0.1px;left:104.6px;width:203.85px;text-align:center;">Number of Months</div>
<div class="c" style="top:258px;font-size:7.8px;color:#000;left:104.6px;width:71.2px;text-align:center;">120</div>
<div class="c" style="top:258px;font-size:7.8px;color:#000;left:175.8px;width:69.5px;text-align:center;">180</div>
<div class="c" style="top:258px;font-size:7.8px;color:#000;left:245.3px;width:63.15px;text-align:center;">240</div>
<div class="c" style="top:269px;font-size:7.8px;color:#000;letter-spacing:-0.35px;left:15.75px;width:88.85px;text-align:center;">3.85%</div>
<div class="c" style="top:281px;font-size:7.8px;color:#000;letter-spacing:-0.35px;left:15.75px;width:88.85px;text-align:center;">3.95%</div>
<div class="c" style="top:291px;font-size:7.8px;color:#000;letter-spacing:-0.35px;left:15.75px;width:88.85px;text-align:center;">4.05%</div>
<div class="c" style="top:301px;font-size:7.8px;color:#000;letter-spacing:-0.35px;left:15.75px;width:88.85px;text-align:center;">4.15%</div>
<div class="c" style="top:311px;font-size:7.8px;color:#000;letter-spacing:-0.35px;left:15.75px;width:88.85px;text-align:center;">4.25%</div>
<div class="c" style="top:321px;font-size:7.8px;color:#000;letter-spacing:-0.35px;left:15.75px;width:88.85px;text-align:center;">4.35%</div>
<div class="c" style="top:331px;font-size:7.8px;color:#000;letter-spacing:-0.35px;left:15.75px;width:88.85px;text-align:center;">4.45%</div>
<div class="c" style="top:341px;font-size:7.8px;color:#000;letter-spacing:-0.35px;left:15.75px;width:88.85px;text-align:center;">4.55%</div>
<div class="c" style="top:351px;font-size:7.8px;color:#000;letter-spacing:-0.35px;left:15.75px;width:88.85px;text-align:center;">4.65%</div>
<div class="c" style="top:361px;font-size:7.8px;color:#000;letter-spacing:-0.35px;left:15.75px;width:88.85px;text-align:center;">4.75%</div>
<div class="c" style="top:371px;font-size:7.8px;color:#000;letter-spacing:-0.35px;left:15.75px;width:88.85px;text-align:center;">4.85%</div>
<div class="c" style="top:381px;font-size:7.8px;color:#000;letter-spacing:-0.35px;left:15.75px;width:88.85px;text-align:center;">4.95%</div>
<div class="c" style="top:391px;font-size:7.8px;color:#000;letter-spacing:-0.35px;left:15.75px;width:88.85px;text-align:center;">5.05%</div>
<div class="c" style="top:167px;font-size:7.8px;color:#000;left:336.5px;">Scenarios</div>
<div class="c" style="top:167px;font-size:7.8px;color:#000;left:423.4px;width:60.2px;text-align:center;">10 Years</div>
<div class="c" style="top:167px;font-size:7.8px;color:#000;left:483.6px;width:51.3px;text-align:center;">15 Years</div>
<div class="c" style="top:167px;font-size:7.8px;color:#000;left:534.9px;width:59.5px;text-align:center;">5 Years</div>
<div class="c" style="top:177px;font-size:7.8px;color:#000;left:336.5px;">Loan Amount</div>
<div class="c" style="top:177px;font-size:7.2px;color:#000;letter-spacing:-0.3px;left:423.4px;width:60.2px;text-align:center;">#NAME?</div>
<div class="c" style="top:177px;font-size:7.2px;color:#000;letter-spacing:-0.3px;left:534.9px;width:59.5px;text-align:center;">#NAME?</div>
<div class="c" style="top:187px;font-size:7.8px;color:#000;left:336.5px;">Annual Interest Rate</div>
<div class="c" style="top:187px;font-size:7.8px;color:#000;letter-spacing:-0.3px;right:541.5px;">4.45%</div>
<div class="c" style="top:187px;font-size:7.8px;color:#000;letter-spacing:-0.3px;right:490.2px;">4.40%</div>
<div class="c" style="top:187px;font-size:7.8px;color:#000;letter-spacing:-0.3px;right:430.7px;">4.55%</div>
<div class="c" style="top:197px;font-size:7.8px;color:#000;letter-spacing:-0.1px;left:336.5px;">Monthly Interest Rate</div>
<div class="c" style="top:197px;font-size:7.8px;color:#000;letter-spacing:-0.3px;right:541.5px;">0.37%</div>
<div class="c" style="top:197px;font-size:7.8px;color:#000;letter-spacing:-0.3px;right:490.2px;">0.37%</div>
<div class="c" style="top:197px;font-size:7.8px;color:#000;letter-spacing:-0.3px;right:430.7px;">0.38%</div>
<div class="c" style="top:207px;font-size:7.8px;color:#000;letter-spacing:-0.1px;left:336.5px;">Loan Period in Years</div>
<div class="c" style="top:207px;font-size:7.8px;color:#000;right:541.5px;">10</div>
<div class="c" style="top:207px;font-size:7.8px;color:#000;right:490.2px;">15</div>
<div class="c" style="top:207px;font-size:7.8px;color:#000;right:430.7px;">5</div>
<div class="c" style="top:217px;font-size:7.8px;color:#000;letter-spacing:-0.1px;left:336.5px;">Loan Period in Months</div>
<div class="c" style="top:217px;font-size:7.8px;color:#000;right:541.5px;">120</div>
<div class="c" style="top:217px;font-size:7.8px;color:#000;right:490.2px;">180</div>
<div class="c" style="top:217px;font-size:7.8px;color:#000;right:430.7px;">60</div>
<div class="c" style="top:227px;font-size:7.8px;color:#000;left:336.5px;">Start Date</div>
<div class="c" style="top:227px;font-size:7.8px;color:#000;letter-spacing:0.45px;right:541.5px;">1/3/22</div>
<div class="c" style="top:227px;font-size:7.8px;color:#000;letter-spacing:0.45px;right:490.2px;">1/3/22</div>
<div class="c" style="top:227px;font-size:7.8px;color:#000;letter-spacing:0.45px;right:430.7px;">1/3/22</div>
<div class="c" style="top:238px;font-size:7.8px;color:#000;letter-spacing:-0.1px;left:336.5px;">Monthly Payment</div>
<div class="c" style="top:238px;font-size:7.8px;color:#000;left:488.2px;">$</div>
<div class="c" style="top:238px;font-size:7.8px;color:#000;right:490.7px;">(16,000)</div>
<div class="c" style="top:238px;font-size:7.8px;color:#000;left:540.1px;">$</div>
<div class="c" style="top:238px;font-size:7.8px;color:#000;right:430.7px;">(20,000)</div>
<div class="c" style="top:248px;font-size:7.8px;color:#000;left:336.5px;">Future Value</div>
<div class="c" style="top:248px;font-size:7.8px;color:#000;letter-spacing:0.3px;right:541.5px;">n/a</div>
<div class="c" style="top:248px;font-size:7.8px;color:#000;letter-spacing:0.3px;right:490.2px;">n/a</div>
<div class="c" style="top:268px;font-size:9px;color:#1f2a5a;-webkit-text-stroke:0.25px #1f2a5a;left:334.4px;width:260.0px;text-align:center;">Candidate Properties</div>
<div class="c" style="top:281px;font-size:7.8px;color:#000;left:336.5px;">Type</div>
<div class="c" style="top:281px;font-size:7.8px;color:#000;left:425.5px;">Contact</div>
<div class="c" style="top:281px;font-size:7.8px;color:#000;left:485.7px;">State</div>
<div class="c" style="top:281px;font-size:7.8px;color:#000;letter-spacing:-0.25px;left:536.3px;">Months on Mkt</div>
<div class="a" style="left:104.0px;top:427.7px;width:72.4px;height:11.2px;background:transparent;border:1.200px solid #1e7145"></div>
<div class="a" style="left:174.1px;top:436.6px;width:4.0px;height:4.0px;background:#fff;"></div>
<div class="a" style="left:174.6px;top:437.1px;width:3.3px;height:3.3px;background:#1e7145;"></div>
<div class="a" style="left:0px;top:118.2px;width:1024px;height:14.6px;background:#1b1b1b;"></div>
<div class="a" style="left:0px;top:132.8px;width:1024px;height:0.9px;background:#8a8a8a;"></div>
<div class="a" style="left:0px;top:133.3px;width:15.75px;height:413px;background:#1b1b1b;"></div>
<div class="a" style="left:104.6px;top:118.2px;width:71.2px;height:14.6px;background:#505050;"></div>
<div class="a" style="left:104.6px;top:132.3px;width:71.2px;height:1.1px;background:#1e7145;"></div>
<svg style="left:4px;top:121.5px" width="10" height="10" viewBox="0 0 10 10"><path d="M10 0V10H0z" fill="#5a5a5a"/></svg>
<div class="t m" style="left:15.75px;width:88.85px;top:123px;font-size:8px;color:#fff;-webkit-text-stroke:0.35px #fff">A</div>
<div class="a" style="left:104.1px;top:118.5px;width:1px;height:14.3px;background:#3a3a3a;"></div>
<div class="t m" style="left:104.6px;width:71.2px;top:123px;font-size:8px;color:#fff;-webkit-text-stroke:0.35px #fff">B</div>
<div class="a" style="left:175.3px;top:118.5px;width:1px;height:14.3px;background:#3a3a3a;"></div>
<div class="t m" style="left:175.8px;width:69.5px;top:123px;font-size:8px;color:#fff;-webkit-text-stroke:0.35px #fff">C</div>
<div class="a" style="left:244.8px;top:118.5px;width:1px;height:14.3px;background:#3a3a3a;"></div>
<div class="t m" style="left:245.3px;width:63.15px;top:123px;font-size:8px;color:#fff;-webkit-text-stroke:0.35px #fff">D</div>
<div class="a" style="left:307.95px;top:118.5px;width:1px;height:14.3px;background:#3a3a3a;"></div>
<div class="t m" style="left:308.45px;width:25.95px;top:123px;font-size:8px;color:#fff;-webkit-text-stroke:0.35px #fff">E</div>
<div class="a" style="left:333.9px;top:118.5px;width:1px;height:14.3px;background:#3a3a3a;"></div>
<div class="t m" style="left:334.4px;width:89.0px;top:123px;font-size:8px;color:#fff;-webkit-text-stroke:0.35px #fff">F</div>
<div class="a" style="left:422.9px;top:118.5px;width:1px;height:14.3px;background:#3a3a3a;"></div>
<div class="t m" style="left:423.4px;width:60.2px;top:123px;font-size:8px;color:#fff;-webkit-text-stroke:0.35px #fff">G</div>
<div class="a" style="left:483.1px;top:118.5px;width:1px;height:14.3px;background:#3a3a3a;"></div>
<div class="t m" style="left:483.6px;width:51.3px;top:123px;font-size:8px;color:#fff;-webkit-text-stroke:0.35px #fff">H</div>
<div class="a" style="left:534.4px;top:118.5px;width:1px;height:14.3px;background:#3a3a3a;"></div>
<div class="t m" style="left:534.9px;width:59.5px;top:123px;font-size:8px;color:#fff;-webkit-text-stroke:0.35px #fff">I</div>
<div class="a" style="left:593.9px;top:118.5px;width:1px;height:14.3px;background:#3a3a3a;"></div>
<div class="t m" style="left:594.4px;width:52.0px;top:123px;font-size:8px;color:#fff;-webkit-text-stroke:0.35px #fff">J</div>
<div class="a" style="left:645.9px;top:118.5px;width:1px;height:14.3px;background:#3a3a3a;"></div>
<div class="t m" style="left:646.4px;width:37.9px;top:123px;font-size:8px;color:#fff;-webkit-text-stroke:0.35px #fff">K</div>
<div class="a" style="left:683.8px;top:118.5px;width:1px;height:14.3px;background:#3a3a3a;"></div>
<div class="t m" style="left:684.3px;width:37.8px;top:123px;font-size:8px;color:#fff;-webkit-text-stroke:0.35px #fff">L</div>
<div class="a" style="left:721.6px;top:118.5px;width:1px;height:14.3px;background:#3a3a3a;"></div>
<div class="t m" style="left:722.1px;width:37.6px;top:123px;font-size:8px;color:#fff;-webkit-text-stroke:0.35px #fff">M</div>
<div class="a" style="left:759.2px;top:118.5px;width:1px;height:14.3px;background:#3a3a3a;"></div>
<div class="t m" style="left:759.7px;width:37.8px;top:123px;font-size:8px;color:#fff;-webkit-text-stroke:0.35px #fff">N</div>
<div class="a" style="left:797.0px;top:118.5px;width:1px;height:14.3px;background:#3a3a3a;"></div>
<div class="t m" style="left:797.5px;width:37.8px;top:123px;font-size:8px;color:#fff;-webkit-text-stroke:0.35px #fff">O</div>
<div class="a" style="left:834.8px;top:118.5px;width:1px;height:14.3px;background:#3a3a3a;"></div>
<div class="t m" style="left:835.3px;width:37.4px;top:123px;font-size:8px;color:#fff;-webkit-text-stroke:0.35px #fff">P</div>
<div class="a" style="left:872.2px;top:118.5px;width:1px;height:14.3px;background:#3a3a3a;"></div>
<div class="t m" style="left:872.7px;width:37.9px;top:123px;font-size:8px;color:#fff;-webkit-text-stroke:0.35px #fff">Q</div>
<div class="a" style="left:910.1px;top:118.5px;width:1px;height:14.3px;background:#3a3a3a;"></div>
<div class="t m" style="left:910.6px;width:37.9px;top:123px;font-size:8px;color:#fff;-webkit-text-stroke:0.35px #fff">R</div>
<div class="a" style="left:948.0px;top:118.5px;width:1px;height:14.3px;background:#3a3a3a;"></div>
<div class="t m" style="left:948.5px;width:36.9px;top:123px;font-size:8px;color:#fff;-webkit-text-stroke:0.35px #fff">S</div>
<div class="a" style="left:984.9px;top:118.5px;width:1px;height:14.3px;background:#3a3a3a;"></div>
<div class="t m" style="left:985.4px;width:38.1px;top:123px;font-size:8px;color:#fff;-webkit-text-stroke:0.35px #fff">T</div>
<div class="a" style="left:15.25px;top:118.5px;width:1px;height:14.3px;background:#3a3a3a;"></div>
<div class="t m" style="left:0;width:15.75px;top:141px;font-size:7.8px;color:#fff;letter-spacing:-0.4px;-webkit-text-stroke:0.28px #fff">1</div>
<div class="a" style="left:0px;top:149.75px;width:15.75px;height:1px;background:#3d3d3d;"></div>
<div class="t m" style="left:0;width:15.75px;top:155px;font-size:7.8px;color:#fff;letter-spacing:-0.4px;-webkit-text-stroke:0.28px #fff">2</div>
<div class="a" style="left:0px;top:163.5px;width:15.75px;height:1px;background:#3d3d3d;"></div>
<div class="t m" style="left:0;width:15.75px;top:167px;font-size:7.8px;color:#fff;letter-spacing:-0.4px;-webkit-text-stroke:0.28px #fff">3</div>
<div class="a" style="left:0px;top:174.0px;width:15.75px;height:1px;background:#3d3d3d;"></div>
<div class="t m" style="left:0;width:15.75px;top:177px;font-size:7.8px;color:#fff;letter-spacing:-0.4px;-webkit-text-stroke:0.28px #fff">4</div>
<div class="a" style="left:0px;top:183.9px;width:15.75px;height:1px;background:#3d3d3d;"></div>
<div class="t m" style="left:0;width:15.75px;top:187px;font-size:7.8px;color:#fff;letter-spacing:-0.4px;-webkit-text-stroke:0.28px #fff">5</div>
<div class="a" style="left:0px;top:193.9px;width:15.75px;height:1px;background:#3d3d3d;"></div>
<div class="t m" style="left:0;width:15.75px;top:197px;font-size:7.8px;color:#fff;letter-spacing:-0.4px;-webkit-text-stroke:0.28px #fff">6</div>
<div class="a" style="left:0px;top:204.0px;width:15.75px;height:1px;background:#3d3d3d;"></div>
<div class="t m" style="left:0;width:15.75px;top:207px;font-size:7.8px;color:#fff;letter-spacing:-0.4px;-webkit-text-stroke:0.28px #fff">7</div>
<div class="a" style="left:0px;top:213.9px;width:15.75px;height:1px;background:#3d3d3d;"></div>
<div class="t m" style="left:0;width:15.75px;top:217px;font-size:7.8px;color:#fff;letter-spacing:-0.4px;-webkit-text-stroke:0.28px #fff">8</div>
<div class="a" style="left:0px;top:223.9px;width:15.75px;height:1px;background:#3d3d3d;"></div>
<div class="t m" style="left:0;width:15.75px;top:227px;font-size:7.8px;color:#fff;letter-spacing:-0.4px;-webkit-text-stroke:0.28px #fff">9</div>
<div class="a" style="left:0px;top:234.5px;width:15.75px;height:1px;background:#3d3d3d;"></div>
<div class="t m" style="left:0;width:15.75px;top:238px;font-size:7.8px;color:#fff;letter-spacing:-0.4px;-webkit-text-stroke:0.28px #fff">10</div>
<div class="a" style="left:0px;top:245.5px;width:15.75px;height:1px;background:#3d3d3d;"></div>
<div class="t m" style="left:0;width:15.75px;top:248px;font-size:7.8px;color:#fff;letter-spacing:-0.4px;-webkit-text-stroke:0.28px #fff">11</div>
<div class="a" style="left:0px;top:255.2px;width:15.75px;height:1px;background:#3d3d3d;"></div>
<div class="t m" style="left:0;width:15.75px;top:258px;font-size:7.8px;color:#fff;letter-spacing:-0.4px;-webkit-text-stroke:0.28px #fff">12</div>
<div class="a" style="left:0px;top:265.1px;width:15.75px;height:1px;background:#3d3d3d;"></div>
<div class="t m" style="left:0;width:15.75px;top:269px;font-size:7.8px;color:#fff;letter-spacing:-0.4px;-webkit-text-stroke:0.28px #fff">13</div>
<div class="a" style="left:0px;top:277.75px;width:15.75px;height:1px;background:#3d3d3d;"></div>
<div class="t m" style="left:0;width:15.75px;top:281px;font-size:7.8px;color:#fff;letter-spacing:-0.4px;-webkit-text-stroke:0.28px #fff">14</div>
<div class="a" style="left:0px;top:287.8px;width:15.75px;height:1px;background:#3d3d3d;"></div>
<div class="t m" style="left:0;width:15.75px;top:291px;font-size:7.8px;color:#fff;letter-spacing:-0.4px;-webkit-text-stroke:0.28px #fff">15</div>
<div class="a" style="left:0px;top:297.8px;width:15.75px;height:1px;background:#3d3d3d;"></div>
<div class="t m" style="left:0;width:15.75px;top:301px;font-size:7.8px;color:#fff;letter-spacing:-0.4px;-webkit-text-stroke:0.28px #fff">16</div>
<div class="a" style="left:0px;top:307.8px;width:15.75px;height:1px;background:#3d3d3d;"></div>
<div class="t m" style="left:0;width:15.75px;top:311px;font-size:7.8px;color:#fff;letter-spacing:-0.4px;-webkit-text-stroke:0.28px #fff">17</div>
<div class="a" style="left:0px;top:317.8px;width:15.75px;height:1px;background:#3d3d3d;"></div>
<div class="t m" style="left:0;width:15.75px;top:321px;font-size:7.8px;color:#fff;letter-spacing:-0.4px;-webkit-text-stroke:0.28px #fff">18</div>
<div class="a" style="left:0px;top:327.8px;width:15.75px;height:1px;background:#3d3d3d;"></div>
<div class="t m" style="left:0;width:15.75px;top:331px;font-size:7.8px;color:#fff;letter-spacing:-0.4px;-webkit-text-stroke:0.28px #fff">19</div>
<div class="a" style="left:0px;top:337.8px;width:15.75px;height:1px;background:#3d3d3d;"></div>
<div class="t m" style="left:0;width:15.75px;top:341px;font-size:7.8px;color:#fff;letter-spacing:-0.4px;-webkit-text-stroke:0.28px #fff">20</div>
<div class="a" style="left:0px;top:347.8px;width:15.75px;height:1px;background:#3d3d3d;"></div>
<div class="t m" style="left:0;width:15.75px;top:351px;font-size:7.8px;color:#fff;letter-spacing:-0.4px;-webkit-text-stroke:0.28px #fff">21</div>
<div class="a" style="left:0px;top:357.8px;width:15.75px;height:1px;background:#3d3d3d;"></div>
<div class="t m" style="left:0;width:15.75px;top:361px;font-size:7.8px;color:#fff;letter-spacing:-0.4px;-webkit-text-stroke:0.28px #fff">22</div>
<div class="a" style="left:0px;top:367.8px;width:15.75px;height:1px;background:#3d3d3d;"></div>
<div class="t m" style="left:0;width:15.75px;top:371px;font-size:7.8px;color:#fff;letter-spacing:-0.4px;-webkit-text-stroke:0.28px #fff">23</div>
<div class="a" style="left:0px;top:377.8px;width:15.75px;height:1px;background:#3d3d3d;"></div>
<div class="t m" style="left:0;width:15.75px;top:381px;font-size:7.8px;color:#fff;letter-spacing:-0.4px;-webkit-text-stroke:0.28px #fff">24</div>
<div class="a" style="left:0px;top:387.8px;width:15.75px;height:1px;background:#3d3d3d;"></div>
<div class="t m" style="left:0;width:15.75px;top:391px;font-size:7.8px;color:#fff;letter-spacing:-0.4px;-webkit-text-stroke:0.28px #fff">25</div>
<div class="a" style="left:0px;top:397.8px;width:15.75px;height:1px;background:#3d3d3d;"></div>
<div class="t m" style="left:0;width:15.75px;top:401px;font-size:7.8px;color:#fff;letter-spacing:-0.4px;-webkit-text-stroke:0.28px #fff">26</div>
<div class="a" style="left:0px;top:407.8px;width:15.75px;height:1px;background:#3d3d3d;"></div>
<div class="t m" style="left:0;width:15.75px;top:411px;font-size:7.8px;color:#fff;letter-spacing:-0.4px;-webkit-text-stroke:0.28px #fff">27</div>
<div class="a" style="left:0px;top:417.8px;width:15.75px;height:1px;background:#3d3d3d;"></div>
<div class="t m" style="left:0;width:15.75px;top:421px;font-size:7.8px;color:#fff;letter-spacing:-0.4px;-webkit-text-stroke:0.28px #fff">28</div>
<div class="a" style="left:0px;top:427.8px;width:15.75px;height:1px;background:#3d3d3d;"></div>
<div class="a" style="left:0px;top:428.3px;width:15.75px;height:10.0px;background:#505050;"></div>
<div class="a" style="left:14.75px;top:428.3px;width:1px;height:10.0px;background:#1e7145;"></div>
<div class="t m" style="left:0;width:15.75px;top:431px;font-size:7.8px;color:#fff;letter-spacing:-0.4px;-webkit-text-stroke:0.28px #fff">29</div>
<div class="a" style="left:0px;top:437.8px;width:15.75px;height:1px;background:#3d3d3d;"></div>
<div class="t m" style="left:0;width:15.75px;top:441px;font-size:7.8px;color:#fff;letter-spacing:-0.4px;-webkit-text-stroke:0.28px #fff">30</div>
<div class="a" style="left:0px;top:447.71px;width:15.75px;height:1px;background:#3d3d3d;"></div>
<div class="t m" style="left:0;width:15.75px;top:450px;font-size:7.8px;color:#fff;letter-spacing:-0.4px;-webkit-text-stroke:0.28px #fff">31</div>
<div class="a" style="left:0px;top:457.62px;width:15.75px;height:1px;background:#3d3d3d;"></div>
<div class="t m" style="left:0;width:15.75px;top:460px;font-size:7.8px;color:#fff;letter-spacing:-0.4px;-webkit-text-stroke:0.28px #fff">32</div>
<div class="a" style="left:0px;top:467.53px;width:15.75px;height:1px;background:#3d3d3d;"></div>
<div class="t m" style="left:0;width:15.75px;top:470px;font-size:7.8px;color:#fff;letter-spacing:-0.4px;-webkit-text-stroke:0.28px #fff">33</div>
<div class="a" style="left:0px;top:477.44px;width:15.75px;height:1px;background:#3d3d3d;"></div>
<div class="t m" style="left:0;width:15.75px;top:480px;font-size:7.8px;color:#fff;letter-spacing:-0.4px;-webkit-text-stroke:0.28px #fff">34</div>
<div class="a" style="left:0px;top:487.35px;width:15.75px;height:1px;background:#3d3d3d;"></div>
<div class="t m" style="left:0;width:15.75px;top:490px;font-size:7.8px;color:#fff;letter-spacing:-0.4px;-webkit-text-stroke:0.28px #fff">35</div>
<div class="a" style="left:0px;top:497.26px;width:15.75px;height:1px;background:#3d3d3d;"></div>
<div class="t m" style="left:0;width:15.75px;top:500px;font-size:7.8px;color:#fff;letter-spacing:-0.4px;-webkit-text-stroke:0.28px #fff">36</div>
<div class="a" style="left:0px;top:507.17px;width:15.75px;height:1px;background:#3d3d3d;"></div>
<div class="t m" style="left:0;width:15.75px;top:510px;font-size:7.8px;color:#fff;letter-spacing:-0.4px;-webkit-text-stroke:0.28px #fff">37</div>
<div class="a" style="left:0px;top:517.08px;width:15.75px;height:1px;background:#3d3d3d;"></div>
<div class="t m" style="left:0;width:15.75px;top:520px;font-size:7.8px;color:#fff;letter-spacing:-0.4px;-webkit-text-stroke:0.28px #fff">38</div>
<div class="a" style="left:0px;top:526.99px;width:15.75px;height:1px;background:#3d3d3d;"></div>
<div class="t m" style="left:0;width:15.75px;top:530px;font-size:7.8px;color:#fff;letter-spacing:-0.4px;-webkit-text-stroke:0.28px #fff">39</div>
<div class="a" style="left:0px;top:536.9px;width:15.75px;height:1px;background:#3d3d3d;"></div>
<div class="t m" style="left:0;width:15.75px;top:540px;font-size:7.8px;color:#fff;letter-spacing:-0.4px;-webkit-text-stroke:0.28px #fff">40</div>
<div class="a" style="left:0px;top:546px;width:1024px;height:18.4px;background:#2b2b2b;"></div>
<div class="a" style="left:0px;top:546px;width:1024px;height:0.8px;background:#111;"></div>
<div class="a" style="left:43px;top:546.6px;width:588px;height:17.8px;background:#1d1d1d;"></div>
<svg style="left:10.5px;top:551.5px" width="6" height="7" viewBox="0 0 6 7"><path d="M5.500 0.300V6.700L0.500 3.500z" fill="#6a6a6a"/></svg>
<svg style="left:26px;top:551.5px" width="6" height="7" viewBox="0 0 6 7"><path d="M0.500 0.300V6.700L5.500 3.500z" fill="#6a6a6a"/></svg>
<div class="t m" style="left:36.2px;width:100px;top:549.6px;font-size:8.900px;color:#9c9c9c">Documentation</div>
<div class="t m" style="left:107px;width:100px;top:549.6px;font-size:8.900px;color:#9c9c9c">U.S.</div>
<div class="t m" style="left:163px;width:100px;top:549.6px;font-size:8.900px;color:#9c9c9c">Canada</div>
<div class="t m" style="left:219.5px;width:100px;top:549.6px;font-size:8.900px;color:#9c9c9c">U.K.</div>
<div class="t m" style="left:285px;width:100px;top:549.6px;font-size:8.900px;color:#9c9c9c">All Locations</div>
<div class="t m" style="left:368.4px;width:100px;top:549.6px;font-size:8.900px;color:#9c9c9c">Original Content</div>
<div class="t m" style="left:444.9px;width:100px;top:549.6px;font-size:8.900px;color:#9c9c9c">Subtotals</div>
<div class="a" style="left:129.2px;top:547.5px;width:1px;height:15px;background:#3c3c3c;"></div>
<div class="a" style="left:184.5px;top:547.5px;width:1px;height:15px;background:#3c3c3c;"></div>
<div class="a" style="left:240.9px;top:547.5px;width:1px;height:15px;background:#3c3c3c;"></div>
<div class="a" style="left:297.1px;top:547.5px;width:1px;height:15px;background:#3c3c3c;"></div>
<div class="a" style="left:372.7px;top:547.5px;width:1px;height:15px;background:#3c3c3c;"></div>
<div class="a" style="left:464.0px;top:547.5px;width:1px;height:15px;background:#3c3c3c;"></div>
<div class="a" style="left:658.1px;top:547.5px;width:1px;height:15px;background:#3c3c3c;"></div>
<div class="a" style="left:526px;top:546.2px;width:105px;height:15.6px;background:#fff;border-radius:0 0 3px 3px"></div>
<div class="t m" style="left:526px;width:105px;top:549.9px;font-size:8.350px;font-weight:700;color:#1e7145">Expansion Funding</div>
<svg style="left:640.5px;top:551px" width="8" height="8" viewBox="0 0 8 8"><path d="M4 0.500V7.500M0.500 4H7.500" stroke="#cfcfcf" stroke-width="1.400"/></svg>
<div class="a" style="left:0px;top:564.3px;width:1024px;height:16.5px;background:linear-gradient(#424242,#2e2e2e);"></div>
<div class="a" style="left:0px;top:564.3px;width:1024px;height:0.7px;background:#1a1a1a;"></div>
<div class="t" style="left:17.6px;top:568.8px;font-size:8.6px;color:#ececec;font-weight:400;">Ready</div>
<div class="a" style="left:798.7px;top:565px;width:25px;height:15px;background:#585858;"></div>
<svg style="left:806.3px;top:568px" width="10" height="9" viewBox="0 0 10 9"><rect x="0.500" y="0.500" width="9" height="8" fill="none" stroke="#f0f0f0" stroke-width="1"/><path d="M3.500 0.500v8M6.500 0.500v8" stroke="#f0f0f0" stroke-width="1"/></svg>
<svg style="left:832px;top:568px" width="10" height="9" viewBox="0 0 10 9"><rect x="0.500" y="0.500" width="9" height="8" fill="none" stroke="#e0e0e0" stroke-width="1"/><rect x="3" y="2.500" width="4" height="4" fill="none" stroke="#e0e0e0" stroke-width="0.900"/></svg>
<svg style="left:857px;top:568px" width="10" height="9" viewBox="0 0 10 9"><rect x="0.500" y="0.500" width="9" height="8" fill="none" stroke="#e0e0e0" stroke-width="1"/><path d="M0.500 5.500h9M3.500 0.500v5" stroke="#e0e0e0" stroke-width="0.900"/></svg>
<div class="a" style="left:880.5px;top:572.4px;width:5.5px;height:1.2px;background:#e6e6e6;"></div>
<div class="a" style="left:892px;top:571.4px;width:69px;height:3.0px;background:#858585;border-radius:1.500px"></div>
<div class="a" style="left:922.4px;top:568.9px;width:7.8px;height:7.8px;background:#d6d6d6;border-radius:50%"></div>
<svg style="left:966.5px;top:569.8px" width="6.4" height="6.4" viewBox="0 0 6.400 6.400"><path d="M3.200 0V6.400M0 3.200H6.400" stroke="#f0f0f0" stroke-width="1.400"/></svg>
<div class="t" style="left:985px;top:569px;font-size:8.3px;color:#ececec;font-weight:400;">100%</div>
<div class="a" style="left:0.4px;top:2px;width:1px;height:577px;background:#5c5c5c;"></div>
</div>
<div class="a" style="left:28.500px;top:596.500px;width:967px;height:44px;background:linear-gradient(90deg,#1a1b26 0,#1d1d22 11%,#3a3a3b 12.500%,#585858 13.900%,#7a7a7a 15.300%,#8a8a8a 16.800%,#8e8e8e 30%,#8c8c8c 60%,#8a8a8a 70.500%,#7a7a7b 72%,#636365 74%,#3c3c40 76.300%,#222228 78%,#1a1c2a 81%,#171a2d 88%,#161a2e 100%)"></div>
<div class="a" style="left:28.500px;top:596.500px;width:967px;height:1px;background:rgba(255,255,255,0.12)"></div>
<svg style="left:35.0px;top:605.0px" width="26" height="24" viewBox="0 0 26 24"><defs><clipPath id="fc"><rect x="0" y="0" width="26" height="24" rx="2.500"/></clipPath></defs><g clip-path="url(#fc)"><defs><linearGradient id="fg" x1="0" y1="0" x2="0" y2="1"><stop offset="0" stop-color="#2fb4ff"/><stop offset="1" stop-color="#0b7fe6"/></linearGradient></defs><rect width="26" height="24" fill="url(#fg)"/><path d="M14.500 0H26V24H13.500c-1-3-1.500-6-1.500-9h3.500C15 9 15 4 14.500 0z" fill="#e9eef5"/><path d="M7.500 6.500v3M18.500 6.500v3" stroke="#1a2a40" stroke-width="1.300" stroke-linecap="round"/><path d="M5 15.500c4.500 4.500 12 4.500 16.500 0" fill="none" stroke="#1a2a40" stroke-width="1.200" stroke-linecap="round"/></g></svg>
<div class="a" style="left:68px;top:603px;width:28px;height:28px;border-radius:50%;background:radial-gradient(circle at 50% 50%,#2b3fb8 0,#27207a 35%,#1a1440 60%,#120e22 100%);border:1.300px solid #ececf2"></div>
<svg style="left:69.0px;top:604.0px" width="26" height="26" viewBox="0 0 26 26"><defs><clipPath id="sc"><circle cx="13" cy="13" r="12.500"/></clipPath><radialGradient id="sw"><stop offset="0" stop-color="#fff"/><stop offset="0.350" stop-color="#dff6ff" stop-opacity="0.900"/><stop offset="1" stop-color="#7fd0ff" stop-opacity="0"/></radialGradient></defs><g clip-path="url(#sc)"><ellipse cx="9" cy="6.500" rx="7" ry="3.200" fill="#e0359a" opacity="0.850" transform="rotate(35 9 6.500)"/><ellipse cx="17" cy="5.500" rx="5" ry="2.400" fill="#b03ad0" opacity="0.600" transform="rotate(-30 17 5.500)"/><ellipse cx="7" cy="17" rx="7" ry="2.200" fill="#2fc8f0" opacity="0.900" transform="rotate(-35 7 17)"/><ellipse cx="19.500" cy="15.500" rx="6.500" ry="2" fill="#2fd08a" opacity="0.850" transform="rotate(20 19.500 15.500)"/><ellipse cx="15.500" cy="20" rx="6" ry="1.500" fill="#e8409a" opacity="0.800" transform="rotate(70 15.500 20)"/><ellipse cx="13" cy="13" rx="10" ry="1.300" fill="#bfeaff" opacity="0.850" transform="rotate(-30 13 13)"/><ellipse cx="13" cy="13" rx="8" ry="1.100" fill="#e8fbff" opacity="0.850" transform="rotate(40 13 13)"/><circle cx="13" cy="13" r="5" fill="url(#sw)"/></g></svg>
<div class="a" style="left:103px;top:603px;width:28px;height:28px;border-radius:50%;background:linear-gradient(#c4c7ca,#8a8d91);border:1px solid #b4b6b9"></div>
<svg style="left:104.0px;top:604.0px" width="26" height="26" viewBox="0 0 26 26"><g fill="#3f4247"><path d="M22 4c-6-.500-10.500 2.800-14 8.500l5.500 5.500c5.700-3.500 9-8 8.500-14z"/><path d="M9.500 10l-5.500 1-1.200 2.700 4.200.600zM16 16.500l-1 5.500-2.700 1.200-.600-4.200zM7.500 16.500l-3.500 1.800-.800 4.500 4.500-.800 1.800-3.500z"/></g><circle cx="16.300" cy="9.700" r="1.700" fill="#b9bcc0"/></svg>
<div class="a" style="left:137px;top:603px;width:28px;height:28px;border-radius:50%;background:radial-gradient(circle at 50% 40%,#38b6ff 0,#1a7cf0 70%,#1767d6 100%);border:1.500px solid #e6e8ec"></div>
<svg style="left:140.0px;top:606.0px" width="22" height="22" viewBox="0 0 22 22"><path d="M18.500 3.500L9.600 9.600l2.800 2.800z" fill="#ff3b30"/><path d="M3.500 18.500l8.900-6.100-2.800-2.800z" fill="#f4f4f4"/></svg>
<svg style="left:172.6px;top:601.5px" width="26" height="30" viewBox="0 0 26 30"><defs><linearGradient id="sky" x1="0" y1="0" x2="0" y2="1"><stop offset="0" stop-color="#2a78dc"/><stop offset="0.600" stop-color="#5fa6ee"/><stop offset="1" stop-color="#c4e2fa"/></linearGradient></defs><g transform="rotate(-9 13 15)"><rect x="2.500" y="2" width="19.500" height="25.500" fill="#f4f4f4"/><rect x="4.300" y="3.800" width="16" height="22" fill="url(#sky)"/><path d="M7 7.500c1.500-1 3-.500 3.500 1l1.500 4c2 .500 3.500 2 4.500 4.500l-2.500-1-1 3-2-3.500c-1.500-.500-2.500-1.500-3-3z" fill="#d9cdb8"/><path d="M9.500 12.500c1 2 2.500 3 5 3.500l2 3-3.500-1.500-3.500-2z" fill="#8a6a45"/></g><circle cx="20" cy="23.500" r="4.500" fill="none" stroke="#70757c" stroke-width="0.700" opacity="0.800"/><circle cx="20" cy="23.500" r="3" fill="none" stroke="#70757c" stroke-width="0.500" opacity="0.700"/></svg>
<svg style="left:207.0px;top:602.5px" width="25" height="29" viewBox="0 0 25 29"><g transform="rotate(-6 12.500 14.500)"><rect x="20" y="6.500" width="3.300" height="4" fill="#c9ccd0"/><rect x="20" y="10.500" width="3.300" height="4.500" fill="#4fb6e8"/><rect x="20" y="15" width="3.300" height="4.500" fill="#5bc45a"/><rect x="20" y="19.500" width="3.300" height="4.500" fill="#f0a030"/><rect x="1.500" y="1.500" width="20" height="26" rx="1.800" fill="#b98a56"/><rect x="1.500" y="1.500" width="2.600" height="26" rx="1.300" fill="#a67a48"/><circle cx="12.500" cy="12.500" r="6.300" fill="none" stroke="#a67a48" stroke-width="1"/><circle cx="10.800" cy="11" r="2" fill="#a67a48"/><circle cx="14.500" cy="11" r="2" fill="#a67a48"/><path d="M8 16c.500-2.500 8.500-2.500 9 0z" fill="#a67a48"/></g></svg>
<svg style="left:240.5px;top:602.5px" width="28" height="29" viewBox="0 0 28 29"><g transform="rotate(-7 14 14.500)"><path d="M2 24.500h24l-1 2.500h-22z" fill="#5a6670"/><rect x="2" y="2.500" width="24" height="23" rx="1.500" fill="#fbfbfb"/><path d="M2 4a1.500 1.500 0 0 1 1.500-1.500h21a1.500 1.500 0 0 1 1.500 1.500v5h-24z" fill="#e8504a"/><text x="14" y="8" font-family="Liberation Sans,sans-serif" font-size="4.800" font-weight="700" fill="#fff" text-anchor="middle">NOV</text><text x="14" y="22.500" font-family="Liberation Sans,sans-serif" font-size="14" fill="#222" text-anchor="middle">20</text></g></svg>
<svg style="left:276.3px;top:601.0px" width="27" height="31" viewBox="0 0 27 31"><g transform="rotate(-8 13.500 15.500)"><rect x="2" y="2" width="23" height="27" rx="1" fill="#f6f4ea"/><rect x="2" y="2" width="23" height="4.800" rx="1" fill="#f6c944"/><path d="M2 28.500h23" stroke="#d8b24a" stroke-width="0.800"/><path d="M4 10h19M4 12.800h19M4 15.600h19M4 18.400h19M4 21.200h19M4 24h19M4 26.500h19" stroke="#dcdad0" stroke-width="0.600"/></g></svg>
<svg style="left:311.2px;top:602.3px" width="26" height="29" viewBox="0 0 26 29"><g transform="rotate(-10 13 14.500)"><rect x="2" y="2" width="22" height="25" rx="2" fill="#f6f6f6"/><path d="M2.500 26.800h21" stroke="#333" stroke-width="0.600" opacity="0.600"/><circle cx="6.300" cy="7.500" r="2" fill="#ff9a2e"/><circle cx="6.300" cy="12.500" r="2" fill="#2d8cf0"/><circle cx="6.300" cy="17.500" r="2" fill="#4cd04a"/><circle cx="6.300" cy="22.500" r="2" fill="#c86dd7"/><path d="M10 7.500h11M10 12.500h11M10 17.500h11M10 22.500h11" stroke="#e2e2e2" stroke-width="0.600"/></g></svg>
<svg style="left:344.5px;top:603.0px" width="29" height="28" viewBox="0 0 29 28"><g transform="rotate(-4 12 13)"><rect x="1" y="2" width="23" height="23" rx="2" fill="#f3eedd"/><path d="M1 8l9-6h6l-6 8-9 4z" fill="#f1c94d"/><path d="M13 2h11v12c-5-2-9-6-11-12z" fill="#b6dc9a"/><path d="M1 17l8-3 6 11H3a2 2 0 0 1-2-2z" fill="#f3b8b0"/><path d="M9 2l3 23" stroke="#fff" stroke-width="1.500"/><circle cx="9" cy="15" r="4" fill="#2a6fe0"/><path d="M9 12.500v3.500h2" stroke="#fff" stroke-width="1" fill="none"/></g><circle cx="22.500" cy="20" r="5.500" fill="#f2f2f2" stroke="#8a8a8a" stroke-width="0.600"/><circle cx="22.500" cy="20" r="2.500" fill="none" stroke="#555" stroke-width="0.600"/></svg>
<div class="a" style="left:379px;top:603px;width:28px;height:28px;border-radius:50%;background:#f2f2f2;border:0.800px solid #d0d0d0"></div>
<svg style="left:381.0px;top:605.0px" width="24" height="24" viewBox="0 0 24 24"><ellipse cx="12" cy="5.900" rx="3.600" ry="5.400" fill="#f9a12b" opacity="0.900" transform="rotate(0 12 12)"/><ellipse cx="12" cy="5.900" rx="3.600" ry="5.400" fill="#f3d436" opacity="0.900" transform="rotate(45 12 12)"/><ellipse cx="12" cy="5.900" rx="3.600" ry="5.400" fill="#9acb3c" opacity="0.900" transform="rotate(90 12 12)"/><ellipse cx="12" cy="5.900" rx="3.600" ry="5.400" fill="#4fb8a5" opacity="0.900" transform="rotate(135 12 12)"/><ellipse cx="12" cy="5.900" rx="3.600" ry="5.400" fill="#3f9be0" opacity="0.900" transform="rotate(180 12 12)"/><ellipse cx="12" cy="5.900" rx="3.600" ry="5.400" fill="#7f6fc8" opacity="0.900" transform="rotate(225 12 12)"/><ellipse cx="12" cy="5.900" rx="3.600" ry="5.400" fill="#c65ca8" opacity="0.900" transform="rotate(270 12 12)"/><ellipse cx="12" cy="5.900" rx="3.600" ry="5.400" fill="#ef5350" opacity="0.900" transform="rotate(315 12 12)"/></svg>
<svg style="left:413.5px;top:603.0px" width="29" height="28" viewBox="0 0 29 28"><ellipse cx="13" cy="11.500" rx="12.500" ry="10.500" fill="#2f8ff5"/><path d="M5 18c0 3-1.500 5-3 6 4 0 6-1.500 8-3.500z" fill="#2f8ff5"/><ellipse cx="19" cy="19.500" rx="8" ry="6.500" fill="#eef2f7"/><path d="M24 23.500c.500 1.500 1.500 2.500 2.500 3-2 .200-3.500-.500-4.500-1.500z" fill="#eef2f7"/><circle cx="15.500" cy="19.500" r="1.200" fill="#2f8ff5"/><circle cx="19" cy="19.500" r="1.200" fill="#2f8ff5"/><circle cx="22.500" cy="19.500" r="1.200" fill="#2f8ff5"/></svg>
<svg style="left:447.5px;top:603.5px" width="29" height="27" viewBox="0 0 29 27"><rect x="0.500" y="1" width="24" height="22" rx="4" fill="#23c552"/><rect x="4.500" y="7.500" width="10.500" height="9" rx="1.500" fill="#dff5e5"/><path d="M16 11l4.500-3v8L16 13z" fill="#dff5e5"/><circle cx="21.500" cy="19.500" r="6.500" fill="#eef3ef"/><path d="M18.800 16.800c0 3 2.500 5.500 5.500 5.500l.700-1.400-1.700-1.100-.800.700c-.900-.500-1.600-1.200-2.100-2.100l.700-.800-1.100-1.700z" fill="#23b84f"/></svg>
<svg style="left:483.5px;top:602.5px" width="27" height="29" viewBox="0 0 27 29"><g transform="rotate(-6 12 15)"><rect x="2" y="3" width="19" height="24" fill="#f4f4f4"/><rect x="2" y="3" width="19" height="3.600" fill="#f39c2b"/><rect x="5" y="9" width="9" height="7" fill="#3f8fe6"/><path d="M7 11l5 3.500-4-.500z" fill="#f39c2b"/><path d="M4.500 18.500h14M4.500 20.500h14M4.500 22.500h14M4.500 24.500h14M15.500 10h3M15.500 12h3M15.500 14h3" stroke="#b0b0b0" stroke-width="0.600"/></g><path d="M24 2.500l1.800 1L18.500 24l-1.600 2 .100-2.700z" fill="#f0a33a" stroke="#5a4a2a" stroke-width="0.400"/></svg>
<svg style="left:516.7px;top:603.5px" width="28" height="27" viewBox="0 0 28 27"><path d="M1.500 21.500h25l-1.500 4h-22z" fill="#f2f2f2"/><rect x="4" y="13" width="4.600" height="9.500" fill="#ef5350"/><rect x="9.500" y="8" width="4.600" height="14.500" fill="#f5a02c"/><rect x="15" y="1.500" width="4.600" height="21" fill="#3fbf5f"/><rect x="20.500" y="6" width="4.600" height="16.500" fill="#3f8fe6"/></svg>
<svg style="left:552.3px;top:602.5px" width="27" height="29" viewBox="0 0 27 29"><path d="M3.500 1.500h20l2.500 10.500h-25z" fill="#2f8fe8"/><path d="M1 12h25v1.800h-25z" fill="#1b6dc4"/><circle cx="11" cy="6.500" r="3" fill="#f0c23c"/><path d="M11 6.500V3.500a3 3 0 0 1 3 3z" fill="#e85a4a"/><path d="M16 4.500h5M16 6.500h5M16 8.500h5" stroke="#cfe4fa" stroke-width="0.700"/><rect x="12.800" y="13.800" width="1.600" height="10.500" fill="#c9ccd0"/><ellipse cx="13.600" cy="25.800" rx="5.500" ry="1.800" fill="#cdd0d4"/></svg>
<div class="a" style="left:586px;top:603px;width:28.500px;height:28.500px;border-radius:50%;background:#f3f3f5;border:1.600px solid #ea3a55"></div>
<svg style="left:591.3px;top:608.3px" width="18" height="18" viewBox="0 0 18 18"><path d="M1.500 1.500h6l9 11.500v3.500h-6L1.500 5z" fill="#ee3f5a"/><path d="M1.500 8.500l6 8H1.500zM16.500 9.500l-6-8h6z" fill="#f58a9a"/></svg>
<div class="a" style="left:621px;top:603px;width:28px;height:28px;border-radius:50%;background:#f6f6f8;border:1.600px solid transparent;background-image:linear-gradient(#f6f6f8,#f6f6f8),linear-gradient(135deg,#fb5c74,#c86dd7 50%,#4aa8ff);background-origin:border-box;background-clip:padding-box,border-box"></div>
<svg style="left:627.0px;top:608.5px" width="16" height="17" viewBox="0 0 16 17"><defs><linearGradient id="mg" x1="0" y1="0" x2="0.300" y2="1"><stop offset="0" stop-color="#fb5c74"/><stop offset="0.550" stop-color="#b867e0"/><stop offset="1" stop-color="#3fa2ff"/></linearGradient></defs><path d="M5.500 3l8-1.800v10.300a2.300 2 0 1 1-1.500-1.900V4.600l-5 1.100v7.800a2.300 2 0 1 1-1.500-1.900z" fill="url(#mg)"/></svg>
<div class="a" style="left:656px;top:603px;width:28px;height:28px;border-radius:50%;background:linear-gradient(#2fb4ff,#1a6ff0);border:1.200px solid #dfe6f0"></div>
<svg style="left:661.0px;top:608.0px" width="18" height="18" viewBox="0 0 18 18"><path d="M9 2.500L3.500 14M9 2.500L14.500 14M2 11h14" fill="none" stroke="#fff" stroke-width="1.800" stroke-linecap="round"/></svg>
<div class="a" style="left:675px;top:601.300px;width:11px;height:11px;border-radius:50%;background:#ef4444"></div>
<div class="t m" style="left:675px;top:603.700px;width:11px;font-size:6.500px;color:#fff">1</div>
<svg style="left:689.5px;top:602.5px" width="28" height="28" viewBox="0 0 28 28"><g transform="rotate(-7 14 14)"><rect x="2" y="2.500" width="23" height="24" rx="2" fill="#2f9be8"/><rect x="2" y="23" width="23" height="3.500" rx="1.500" fill="#5ab6f2"/><path d="M8.500 2.500h10.500v13.500l-5.200-3.500-5.300 3.500z" fill="#f4f8fc"/></g></svg>
<div class="a" style="left:729px;top:608px;width:1px;height:20.500px;background:rgba(255,255,255,0.550)"></div>
<div class="a" style="left:739.700px;top:603px;width:28px;height:28px;border-radius:50%;background:#1ed760"></div>
<svg style="left:743.7px;top:608.0px" width="20" height="18" viewBox="0 0 20 18"><g fill="none" stroke="#121212" stroke-linecap="round"><path d="M2.500 5c5-1.800 10.500-1.500 15 1" stroke-width="2.400"/><path d="M3.500 9.500c4.500-1.400 8.700-1.100 12.700 1" stroke-width="2"/><path d="M4.500 13.500c3.600-1 7-.800 10 .900" stroke-width="1.600"/></g></svg>
<div class="a" style="left:774px;top:603px;width:28.500px;height:28.500px;border-radius:9px;background:#2d8cff"></div>
<svg style="left:779.3px;top:612.3px" width="18" height="10" viewBox="0 0 18 10"><rect x="0" y="0" width="11.500" height="10" rx="2.300" fill="#fff"/><path d="M12.500 3.500L18 0.300v9.400L12.500 6.500z" fill="#fff"/></svg>
<svg style="left:809.9px;top:601.5px" width="27" height="30" viewBox="0 0 27 30"><g transform="rotate(-7 12 15)"><rect x="2" y="2.500" width="20" height="25" fill="#f5f5f5"/><path d="M4.500 6.500h15M4.500 9h15M4.500 11.500h15M4.500 14h15M4.500 16.500h15M4.500 19h15M4.500 21.500h15M4.500 24h15" stroke="#cfcfcf" stroke-width="0.600"/></g><path d="M23.500 1.500l2 .800L19 25l-2 2.500.200-3.200z" fill="#9aa3ad" stroke="#5f6770" stroke-width="0.400"/></svg>
<svg style="left:843.1px;top:604.0px" width="28" height="26" viewBox="0 0 28 26"><rect x="8" y="0.500" width="19.500" height="25" rx="1.500" fill="#21a366"/><path d="M8 0.500h9.800v8.300H8z" fill="#21a366"/><path d="M17.800 0.500h8.200a1.500 1.500 0 0 1 1.500 1.500v6.800h-9.700z" fill="#33c481"/><path d="M8 8.800h9.800v8.400H8z" fill="#107c41"/><path d="M17.800 8.800h9.700v8.400h-9.700z" fill="#21a366"/><path d="M8 17.200h19.500V24a1.500 1.500 0 0 1-1.500 1.500H9.500A1.500 1.500 0 0 1 8 24z" fill="#185c37"/><path d="M17.800 17.200h9.700V24a1.500 1.500 0 0 1-1.500 1.500h-8.200z" fill="#107c41"/><rect x="0.500" y="6" width="14" height="14" rx="1.300" fill="#107c41"/><text x="7.500" y="17" font-family="Liberation Sans,sans-serif" font-size="10.500" font-weight="700" fill="#fff" text-anchor="middle">X</text></svg>
<svg style="left:878.0px;top:604.0px" width="28" height="26" viewBox="0 0 28 26"><rect x="8" y="0.500" width="19.500" height="25" rx="1.500" fill="#2b7cd3"/><path d="M8 2a1.500 1.500 0 0 1 1.500-1.500h16.500a1.500 1.500 0 0 1 1.500 1.500v4.800H8z" fill="#41a5ee"/><path d="M8 6.800h19.500v6.300H8z" fill="#2b7cd3"/><path d="M8 13.100h19.500v6.200H8z" fill="#185abd"/><path d="M8 19.300h19.500V24a1.500 1.500 0 0 1-1.500 1.500H9.500A1.500 1.500 0 0 1 8 24z" fill="#103f91"/><rect x="0.500" y="6" width="14" height="14" rx="1.300" fill="#185abd"/><text x="7.500" y="16.800" font-family="Liberation Sans,sans-serif" font-size="10" font-weight="700" fill="#fff" text-anchor="middle">W</text></svg>
<div class="a" style="left:916px;top:602px;width:1px;height:33px;background:rgba(255,255,255,0.160)"></div>
<svg style="left:926.2px;top:608.6px" width="31" height="16" viewBox="0 0 31 16"><rect width="31" height="16" fill="#17181c"/><rect x="1" y="1" width="19" height="7" fill="#e8502f"/><rect x="21" y="1" width="9" height="7" fill="#3a2a26"/><rect x="1" y="9" width="4" height="5.500" fill="#b98a56"/><rect x="6" y="9" width="5" height="5.500" fill="#d8d2c4"/><rect x="12" y="9" width="4" height="5.500" fill="#2fae5a"/><rect x="17" y="9" width="5" height="5.500" fill="#c44a30"/><rect x="23" y="9" width="6" height="5.500" fill="#2a2a2e"/></svg>
<div class="a" style="left:945.800px;top:621.500px;width:11px;height:11px;border-radius:50%;background:#1ed760"></div>
<svg style="left:947.8px;top:624.0px" width="7" height="6" viewBox="0 0 7 6"><g fill="none" stroke="#121212" stroke-linecap="round"><path d="M0.800 1.500c2-.600 3.800-.500 5.400.400" stroke-width="0.900"/><path d="M1.200 3.200c1.600-.500 3.100-.400 4.500.300" stroke-width="0.800"/><path d="M1.500 4.800c1.300-.400 2.500-.300 3.600.300" stroke-width="0.700"/></g></svg>
<svg style="left:965.0px;top:601.3px" width="24" height="30" viewBox="0 0 24 30"><defs><linearGradient id="tg" x1="0" x2="1"><stop offset="0" stop-color="#6d7176"/><stop offset="0.450" stop-color="#8e9297"/><stop offset="1" stop-color="#55595e"/></linearGradient></defs><path d="M1 4.500h22l-2.500 24a12 2 0 0 1-17 0z" fill="url(#tg)"/><ellipse cx="12" cy="4.500" rx="11" ry="2.800" fill="#4b4e53"/><path d="M3 3.500c2-3 5-3.500 7-2 2-2 5-1.500 6 0 2-1 4 0 5 2-3 2-14 2-18 0z" fill="#e4e6ea"/><circle cx="9" cy="3" r="1" fill="#d9534f"/><circle cx="13" cy="2.500" r="1" fill="#3f8fe6"/><circle cx="16" cy="3.500" r="0.800" fill="#4cd964"/></svg>
<div class="a" style="left:47px;top:636px;width:2px;height:2px;border-radius:50%;background:#c8c8c8"></div>
<div class="a" style="left:150px;top:636px;width:2px;height:2px;border-radius:50%;background:#c8c8c8"></div>
<div class="a" style="left:752.2px;top:636px;width:2px;height:2px;border-radius:50%;background:#c8c8c8"></div>
<div class="a" style="left:787px;top:636px;width:2px;height:2px;border-radius:50%;background:#c8c8c8"></div>
<div class="a" style="left:821.5px;top:636px;width:2px;height:2px;border-radius:50%;background:#c8c8c8"></div>
<div class="a" style="left:855.7px;top:636px;width:2px;height:2px;border-radius:50%;background:#c8c8c8"></div>
<div class="a" style="left:890px;top:636px;width:2px;height:2px;border-radius:50%;background:#c8c8c8"></div>
</div></body></html>
